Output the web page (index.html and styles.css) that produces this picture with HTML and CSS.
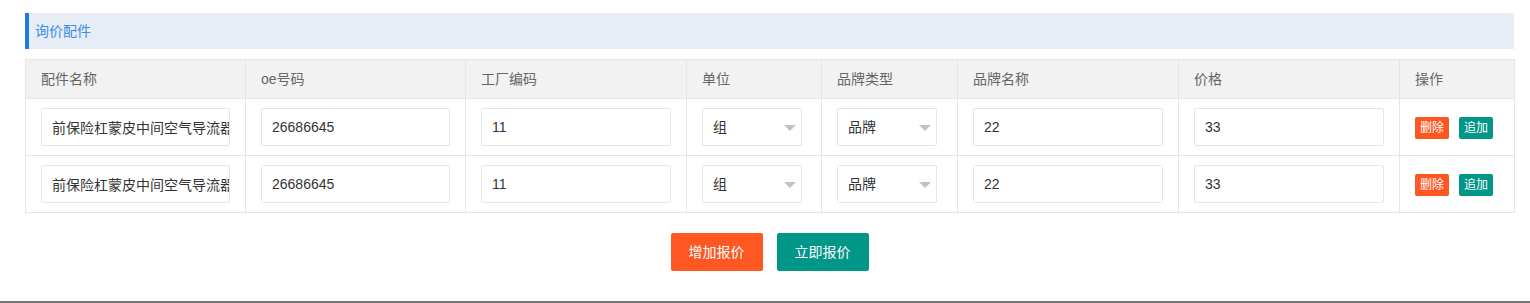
FILE: index.html
```html
<!DOCTYPE html>
<html lang="zh-CN">
<head>
    <meta charset="UTF-8">
    <title>询价配件</title>
    <link rel="stylesheet" href="styles.css">
</head>
<body>
    <div class="page">
        <div class="block-title">询价配件</div>

        <table class="parts-table">
            <colgroup>
                <col style="width: 220px">
                <col style="width: 220px">
                <col style="width: 221px">
                <col style="width: 135px">
                <col style="width: 136px">
                <col style="width: 221px">
                <col style="width: 221px">
                <col style="width: 115px">
            </colgroup>
            <thead>
                <tr>
                    <th>配件名称</th>
                    <th>oe号码</th>
                    <th>工厂编码</th>
                    <th>单位</th>
                    <th>品牌类型</th>
                    <th>品牌名称</th>
                    <th>价格</th>
                    <th>操作</th>
                </tr>
            </thead>
            <tbody>
                <tr>
                    <td><input class="input" type="text" value="前保险杠蒙皮中间空气导流器"></td>
                    <td><input class="input" type="text" value="26686645"></td>
                    <td><input class="input" type="text" value="11"></td>
                    <td><div class="select"><span>组</span><i class="edge"></i></div></td>
                    <td><div class="select"><span>品牌</span><i class="edge"></i></div></td>
                    <td><input class="input" type="text" value="22"></td>
                    <td><input class="input" type="text" value="33"></td>
                    <td>
                        <div class="actions">
                            <button class="btn btn-xs btn-danger">删除</button>
                            <button class="btn btn-xs">追加</button>
                        </div>
                    </td>
                </tr>
                <tr>
                    <td><input class="input" type="text" value="前保险杠蒙皮中间空气导流器"></td>
                    <td><input class="input" type="text" value="26686645"></td>
                    <td><input class="input" type="text" value="11"></td>
                    <td><div class="select"><span>组</span><i class="edge"></i></div></td>
                    <td><div class="select"><span>品牌</span><i class="edge"></i></div></td>
                    <td><input class="input" type="text" value="22"></td>
                    <td><input class="input" type="text" value="33"></td>
                    <td>
                        <div class="actions">
                            <button class="btn btn-xs btn-danger">删除</button>
                            <button class="btn btn-xs">追加</button>
                        </div>
                    </td>
                </tr>
            </tbody>
        </table>

        <div class="footer-btns">
            <button class="btn btn-danger">增加报价</button>
            <button class="btn">立即报价</button>
        </div>
    </div>
    <div class="bottom-line"></div>
</body>
</html>
```

FILE: styles.css
```css
body {
    margin: 0;
    font-family: "Liberation Sans", "Noto Sans CJK SC", sans-serif;
    font-size: 14px;
    color: #333;
    background-color: #fff;
}

.page {
    padding: 13px 16px 0 25px;
    height: 301px; /* line sits at the very bottom */
    box-sizing: border-box;
}

.block-title {
    height: 36px;
    line-height: 36px;
    padding-left: 6px;
    border-left: 4px solid #1e78e0;
    background-color: #e6edf5;
    color: #3a8ee6;
    font-size: 14px;
}

.parts-table {
    margin-top: 10px;
    width: 1489px;
    border-collapse: collapse;
    table-layout: fixed;
}

.parts-table th,
.parts-table td {
    border: 1px solid #e6e6e6;
    padding: 9px 15px;
    line-height: 20px;
    text-align: left;
}

.parts-table th {
    background-color: #f2f2f2;
    color: #666;
    font-weight: 400;
}

.input,
.select {
    display: block;
    width: 100%;
    height: 38px;
    box-sizing: border-box;
    border: 1px solid #e6e6e6;
    border-radius: 2px;
    background-color: #fff;
    font-family: inherit;
    font-size: 14px;
    color: #333;
}

.input {
    padding: 0 0 0 10px;
    outline: none;
}

.select {
    display: flex;
    align-items: center;
    justify-content: space-between;
    width: 100px;
    padding: 0 5px 0 10px;
}

/* layui style triangle */
.edge {
    width: 0;
    height: 0;
    border-style: solid;
    border-width: 6px 6px 0 6px;
    border-color: #c2c2c2 transparent transparent transparent;
    margin-top: 2px;
}

.actions {
    display: flex;
    gap: 10px;
    padding-top: 1px;
}

.btn {
    height: 38px;
    line-height: 38px;
    padding: 0 18px;
    border: none;
    border-radius: 2px;
    background-color: #009688;
    color: #fff;
    font-family: inherit;
    font-size: 14px;
    cursor: pointer;
}

.btn-danger {
    background-color: #ff5722;
}

.btn-xs {
    height: 22px;
    line-height: 22px;
    padding: 0 5px;
    font-size: 12px;
}

.footer-btns {
    display: flex;
    justify-content: center;
    gap: 14px;
    margin-top: 20px;
}

.bottom-line {
    height: 2px;
    background-color: #747474;
}
```
